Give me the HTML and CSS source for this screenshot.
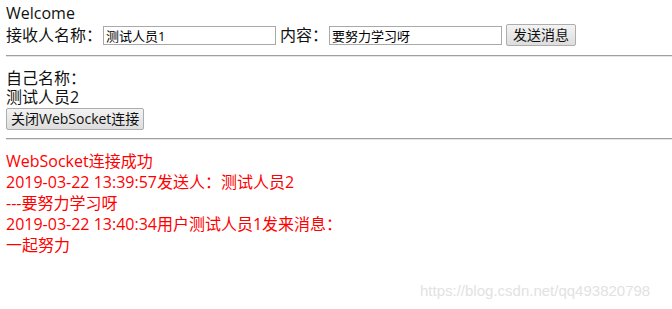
FILE: index.html
```html
<!DOCTYPE html>
<html lang="zh-CN">
<head>
    <meta charset="UTF-8">
    <title>WebSocket</title>
    <link rel="stylesheet" href="styles.css">
</head>
<body>
    <div class="title">Welcome</div>
    <div class="send-row">
        接收人名称：<input type="text" id="receiver" class="field" value="测试人员1">
        内容：<input type="text" id="text" class="field" value="要努力学习呀">
        <button class="btn" onclick="send()">发送消息</button>
    </div>
    <hr>
    <div class="self">
        <div>自己名称：</div>
        <div id="username">测试人员2</div>
        <button class="btn btn-close" onclick="closeWebSocket()">关闭WebSocket连接</button>
    </div>
    <hr>
    <div id="message" class="message">
        <div class="msg">WebSocket连接成功</div>
        <div class="msg">2019-03-22 13:39:57发送人：测试人员2<br>---要努力学习呀</div>
        <div class="msg">2019-03-22 13:40:34用户测试人员1发来消息：<br>一起努力</div>
    </div>
    <div class="watermark">https://blog.csdn.net/qq493820798</div>
</body>
</html>
```
FILE: styles.css
```css
body {
    margin: 0;
    padding: 3px 0 0 6px;
    font-family: "Open Sans", "Noto Sans CJK SC", sans-serif;
    font-size: 16px;
    line-height: 20px;
    color: #111;
    background: #fff;
}

.title {
    height: 20px;
}

.send-row {
    display: flex;
    align-items: center;
    height: 24px;
    white-space: nowrap;
}

.field {
    width: 167px;
    height: 15px;
    margin: 0 4px 0 1px;
    padding: 1px 2px;
    border: 1px solid #a9a9a9;
    font-family: "Open Sans", "Noto Sans CJK SC", sans-serif;
    font-size: 13px;
    color: #000;
}

.btn {
    height: 22px;
    padding: 0 6px;
    border: 1px solid #adadad;
    border-radius: 2px;
    background: linear-gradient(#f3f3f3, #dddddd);
    font-family: "Open Sans", "Noto Sans CJK SC", sans-serif;
    font-size: 14px;
    line-height: 20px;
    color: #111;
}

.btn-close {
    padding: 0 4px;
}

hr {
    margin: 8px 0 0 0;
    border: none;
    border-top: 1px solid #a0a0a0;
    border-bottom: 1px solid #e6e6e6;
}

.self {
    padding-top: 12px;
    line-height: 19px;
}

.self div {
    height: 19px;
}

.self .btn {
    margin-top: 1px;
}

.message {
    padding-top: 11px;
    color: #ff0000;
    line-height: 21px;
}

.watermark {
    position: absolute;
    left: 420px;
    top: 281px;
    font-family: "Liberation Sans", sans-serif;
    font-size: 15px;
    color: #e2e2e2;
}
```
